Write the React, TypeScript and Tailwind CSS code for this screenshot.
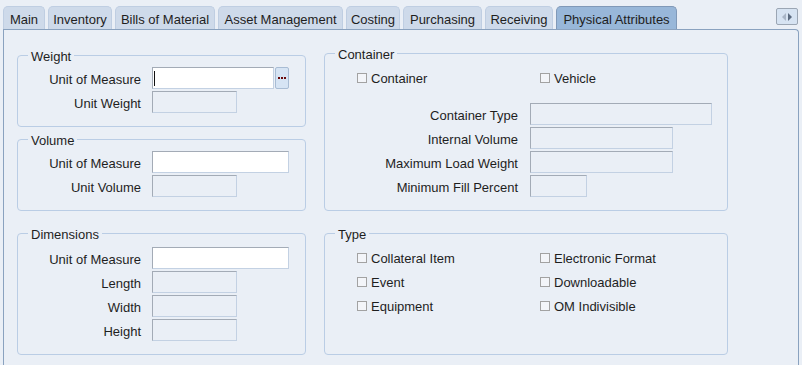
import React from "react";

const tabs = [
  { label: "Main", cls: "w-[42px]" },
  { label: "Inventory", cls: "w-[64px] ml-[3px]" },
  { label: "Bills of Material", cls: "w-[100px] ml-[3px]" },
  { label: "Asset Management", cls: "w-[125px] ml-[3px]" },
  { label: "Costing", cls: "w-[54px] ml-[3px]" },
  { label: "Purchasing", cls: "w-[79px] ml-[3px]" },
  { label: "Receiving", cls: "w-[68px] ml-[3px]" },
  { label: "Physical Attributes", cls: "w-[121px] ml-[3px]", active: true },
];

function Field({ w, white, children }: { w: string; white?: boolean; children?: React.ReactNode }) {
  return (
    <div
      className={
        "h-[22px] shrink-0 flex items-center border border-t-[#a3abb6] border-l-[#a3abb6] border-r-[#c3d1e3] border-b-[#c3d1e3] " +
        w +
        (white ? " bg-white" : " bg-[#eaeff6]")
      }
    >
      {children}
    </div>
  );
}

function Row({
  label,
  labelW,
  gap,
  children,
  className = "",
}: {
  label: string;
  labelW: string;
  gap: string;
  children: React.ReactNode;
  className?: string;
}) {
  return (
    <div className={"flex items-center h-[22px] " + className}>
      <div className={"text-right shrink-0 whitespace-nowrap pt-[3px] " + labelW}>{label}</div>
      <div className={"flex items-center " + gap}>{children}</div>
    </div>
  );
}

function Group({
  title,
  className = "",
  children,
}: {
  title: string;
  className?: string;
  children: React.ReactNode;
}) {
  return (
    <div className={"relative border border-[#bacde5] rounded-[4px] " + className}>
      <span className="absolute -top-[7px] left-[10px] px-[3px] leading-[15px] bg-[#eaeff6] whitespace-nowrap">
        {title}
      </span>
      {children}
    </div>
  );
}

function Check({ label }: { label: string }) {
  return (
    <div className="flex items-center h-[22px]">
      <div className="w-[10px] h-[10px] border border-[#a2a2a2] bg-[#f3f5f9] shrink-0 mt-[2px]" />
      <span className="ml-[4px] whitespace-nowrap pt-[3px]">{label}</span>
    </div>
  );
}

export default function App() {
  return (
    <div className="w-[802px] h-[365px] bg-[#eaeff6] overflow-hidden flex flex-col font-['Liberation_Sans',Arial,sans-serif] text-[13px] text-[#1e1e1e]">
      {/* Tab strip */}
      <div className="flex items-end h-[29px] pl-[3px] pr-[4px] shrink-0">
        {tabs.map((t) => (
          <div
            key={t.label}
            className={
              "h-[23px] rounded-t-[5px] border border-b-0 flex items-center justify-center whitespace-nowrap pt-[3px] " +
              t.cls +
              (t.active ? " bg-[#98b7d9] border-[#8099b8]" : " bg-[#cedaea] border-[#bfcee2]")
            }
          >
            {t.label}
          </div>
        ))}
        <div className="flex-1" />
        <div className="self-start mt-[8px] w-[22px] h-[17px] border border-[#9ba6b4] rounded-[2px] bg-[#d6e3f2] flex items-center justify-center gap-[2px]">
          <svg width="4" height="8" viewBox="0 0 4 8">
            <path d="M4 0 L0 4 L4 8 Z" fill="#a9b6c7" />
          </svg>
          <svg width="4" height="8" viewBox="0 0 4 8">
            <path d="M0 0 L4 4 L0 8 Z" fill="#5b6b80" />
          </svg>
        </div>
      </div>

      {/* Panel */}
      <div className="flex-1 mx-[3px] border-t border-l border-r border-[#8aa2bf] rounded-tr-[4px] flex pt-[23px] pl-[13px]">
        {/* Left column */}
        <div className="w-[289px] flex flex-col pt-[2px]">
          <Group title="Weight" className="pt-[11px] pb-[13px]">
            <Row label="Unit of Measure" labelW="w-[123px]" gap="ml-[11px]">
              <Field w="w-[122px]" white>
                <span className="ml-[1px] w-[1px] h-[15px] bg-[#111]" />
              </Field>
              <div className="ml-[1px] w-[14px] h-[22px] bg-[#d6e4f4] border border-[#a8bcd4] rounded-[2px] flex items-center justify-center gap-[1px]">
                <span className="w-[2px] h-[2px] bg-[#6a0a0a]" />
                <span className="w-[2px] h-[2px] bg-[#6a0a0a]" />
                <span className="w-[2px] h-[2px] bg-[#6a0a0a]" />
              </div>
            </Row>
            <Row label="Unit Weight" labelW="w-[123px]" gap="ml-[11px]" className="mt-[2px]">
              <Field w="w-[85px]" />
            </Row>
          </Group>

          <Group title="Volume" className="mt-[12px] pt-[11px] pb-[13px]">
            <Row label="Unit of Measure" labelW="w-[123px]" gap="ml-[11px]">
              <Field w="w-[137px]" white />
            </Row>
            <Row label="Unit Volume" labelW="w-[123px]" gap="ml-[11px]" className="mt-[2px]">
              <Field w="w-[85px]" />
            </Row>
          </Group>

          <Group title="Dimensions" className="mt-[22px] pt-[13px] pb-[13px]">
            <Row label="Unit of Measure" labelW="w-[123px]" gap="ml-[11px]">
              <Field w="w-[137px]" white />
            </Row>
            <Row label="Length" labelW="w-[123px]" gap="ml-[11px]" className="mt-[2px]">
              <Field w="w-[85px]" />
            </Row>
            <Row label="Width" labelW="w-[123px]" gap="ml-[11px]" className="mt-[2px]">
              <Field w="w-[85px]" />
            </Row>
            <Row label="Height" labelW="w-[123px]" gap="ml-[11px]" className="mt-[2px]">
              <Field w="w-[85px]" />
            </Row>
          </Group>
        </div>

        {/* Right column */}
        <div className="w-[404px] ml-[18px] flex flex-col">
          <Group title="Container" className="pt-[12px] pb-[13px]">
            <div className="flex pl-[32px]">
              <div className="w-[183px]">
                <Check label="Container" />
              </div>
              <Check label="Vehicle" />
            </div>
            <Row label="Container Type" labelW="w-[193px]" gap="ml-[12px]" className="mt-[15px]">
              <Field w="w-[182px]" />
            </Row>
            <Row label="Internal Volume" labelW="w-[193px]" gap="ml-[12px]" className="mt-[2px]">
              <Field w="w-[143px]" />
            </Row>
            <Row label="Maximum Load Weight" labelW="w-[193px]" gap="ml-[12px]" className="mt-[2px]">
              <Field w="w-[143px]" />
            </Row>
            <Row label="Minimum Fill Percent" labelW="w-[193px]" gap="ml-[12px]" className="mt-[2px]">
              <Field w="w-[57px]" />
            </Row>
          </Group>

          <Group title="Type" className="mt-[22px] pt-[12px] pb-[38px]">
            <div className="flex pl-[32px]">
              <div className="w-[183px] flex flex-col gap-[2px]">
                <Check label="Collateral Item" />
                <Check label="Event" />
                <Check label="Equipment" />
              </div>
              <div className="flex flex-col gap-[2px]">
                <Check label="Electronic Format" />
                <Check label="Downloadable" />
                <Check label="OM Indivisible" />
              </div>
            </div>
          </Group>
        </div>
      </div>
    </div>
  );
}
